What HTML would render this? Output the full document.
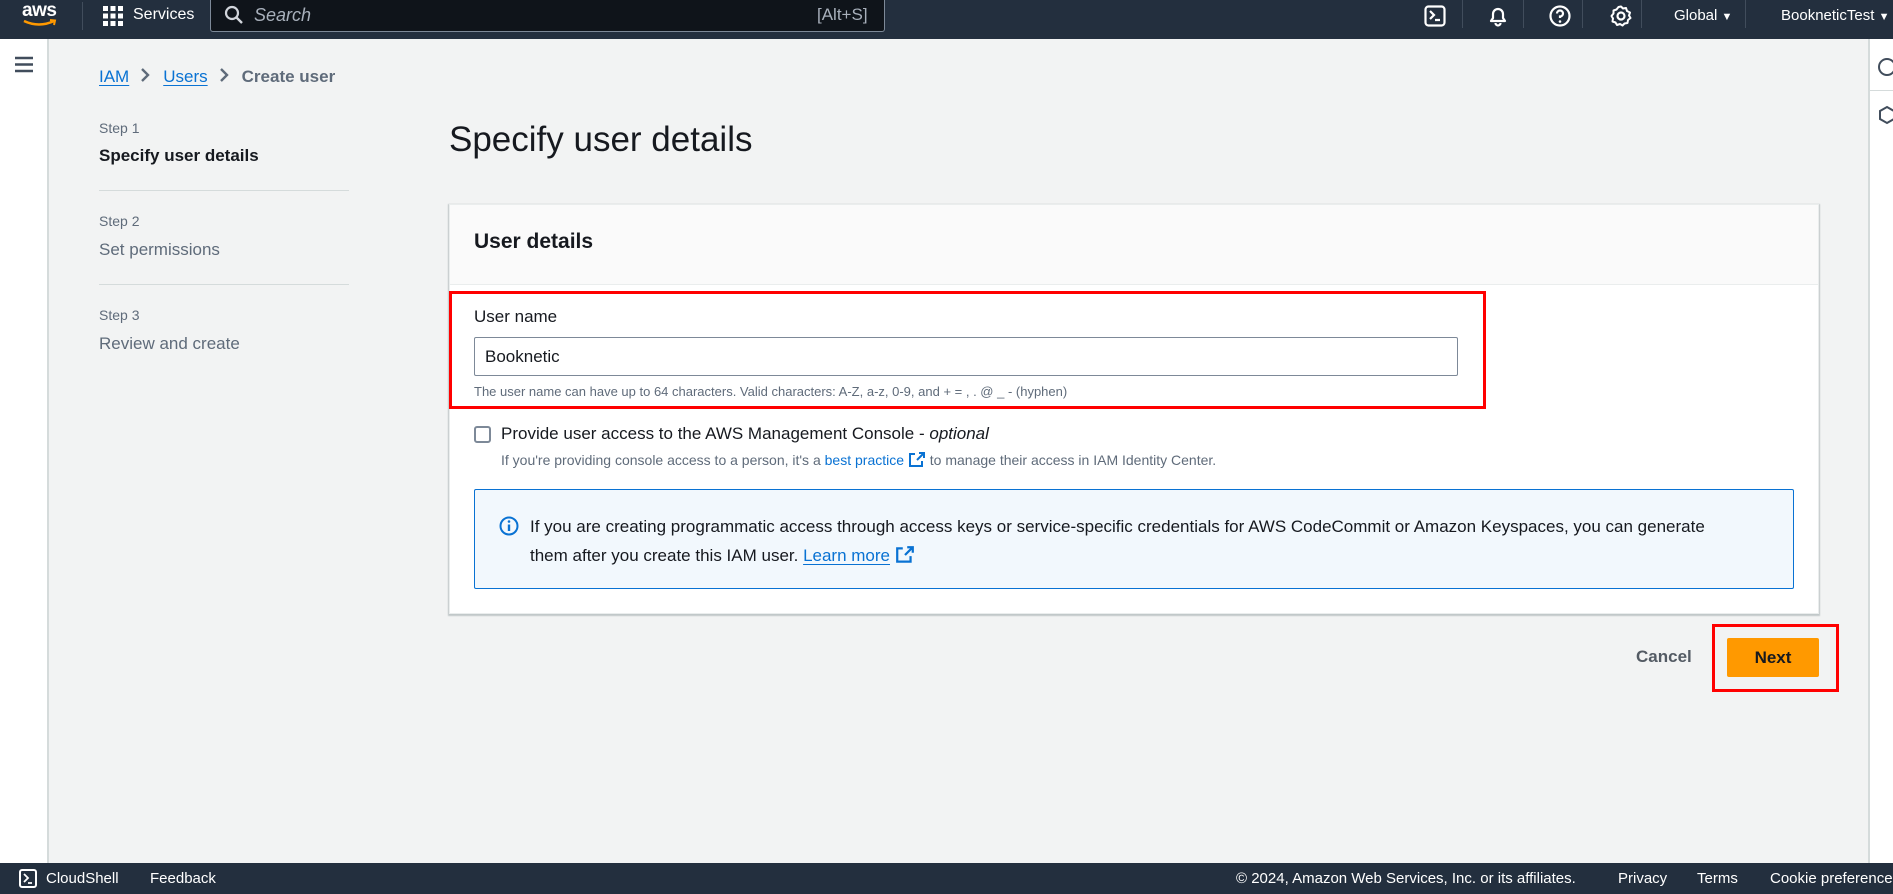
<!DOCTYPE html>
<html><head><meta charset="utf-8">
<style>
*{box-sizing:border-box;margin:0;padding:0}
body{width:1893px;height:894px;overflow:hidden;background:#f2f3f3;font-family:"Liberation Sans",sans-serif;color:#16191f;position:relative}
.abs{position:absolute}
.top{left:0;top:0;width:1893px;height:39px;background:#232f3e}
.white{color:#fff}
.sep{position:absolute;top:0;width:1px;height:28px;background:#414d5c}
.lnk{color:#0972d3;text-decoration:underline;text-underline-offset:3px}
</style></head><body>
<div class="abs top">
  <div class="abs white" style="left:22px;top:0px;font-size:19px;font-weight:bold;letter-spacing:-0.5px">aws</div>
  <svg class="abs" style="left:22px;top:18px" width="36" height="10" viewBox="0 0 36 10"><path d="M2 3 Q17 10 32 3" stroke="#ff9900" stroke-width="2.5" fill="none"/><path d="M28 2 L33 2.5 L32 7" stroke="#ff9900" stroke-width="2" fill="none"/></svg>
  <div class="sep" style="left:82px;top:2px"></div>
  <svg class="abs" style="left:103px;top:6px" width="20" height="20" viewBox="0 0 20 20" fill="#fff"><rect x="0" y="0" width="5" height="5"/><rect x="7.5" y="0" width="5" height="5"/><rect x="15" y="0" width="5" height="5"/><rect x="0" y="7.5" width="5" height="5"/><rect x="7.5" y="7.5" width="5" height="5"/><rect x="15" y="7.5" width="5" height="5"/><rect x="0" y="15" width="5" height="5"/><rect x="7.5" y="15" width="5" height="5"/><rect x="15" y="15" width="5" height="5"/></svg>
  <div class="abs white" style="left:133px;top:6px;font-size:16px">Services</div>
  <div class="abs" style="left:210px;top:-1px;width:675px;height:33px;border:1px solid #7d8998;border-top:none;border-radius:0 0 3px 3px;background:#0f141a"></div>
  <svg class="abs" style="left:224px;top:5px" width="20" height="20" viewBox="0 0 20 20"><circle cx="8" cy="8" r="6" stroke="#d1d5db" stroke-width="2.2" fill="none"/><path d="M12.5 12.5 L18 18" stroke="#d1d5db" stroke-width="2.4"/></svg>
  <div class="abs" style="left:254px;top:5px;font-size:18px;font-style:italic;color:#a8b0bb">Search</div>
  <div class="abs" style="left:817px;top:5px;font-size:17px;color:#a8b0bb">[Alt+S]</div>
  <svg class="abs" style="left:1424px;top:5px" width="22" height="22" viewBox="0 0 22 22"><rect x="1.5" y="1.5" width="19" height="19" rx="3" stroke="#fff" stroke-width="2.2" fill="none"/><path d="M6 6 L10 10 L6 14 M11 15 H16" stroke="#fff" stroke-width="2.2" fill="none"/></svg>
  <div class="sep" style="left:1462px"></div>
  <svg class="abs" style="left:1486px;top:4px" width="24" height="24" viewBox="0 0 24 24"><path d="M5 17 L7 14 V10 A5 5 0 0 1 17 10 V14 L19 17 Z" stroke="#fff" stroke-width="2.2" fill="none" stroke-linejoin="round"/><path d="M9.5 19 A2.5 2.5 0 0 0 14.5 19" stroke="#fff" stroke-width="2.2" fill="none"/></svg>
  <div class="sep" style="left:1523px"></div>
  <svg class="abs" style="left:1548px;top:4px" width="24" height="24" viewBox="0 0 24 24"><circle cx="12" cy="12" r="9.5" stroke="#fff" stroke-width="2.2" fill="none"/><path d="M9 9.5 A3 3 0 1 1 12 12.5 V14" stroke="#fff" stroke-width="2.2" fill="none"/><circle cx="12" cy="17.5" r="1.3" fill="#fff"/></svg>
  <div class="sep" style="left:1582px"></div>
  <svg class="abs" style="left:1609px;top:4px" width="24" height="24" viewBox="0 0 24 24"><path d="M12 2.5 L14 4.5 L17 4 L18 7 L21 8.5 L20 11.5 L21.5 14 L19 16 L18.5 19 L15.5 19.5 L13.5 21.5 L11 20 L8 21 L6.5 18.5 L3.5 17.5 L4 14.5 L2.5 12 L4.5 9.5 L4.5 6.5 L7.5 5.5 L9.5 3 Z" stroke="#fff" stroke-width="2" fill="none" stroke-linejoin="round"/><circle cx="12" cy="12" r="3.5" stroke="#fff" stroke-width="2.2" fill="none"/></svg>
  <div class="sep" style="left:1641px"></div>
  <div class="abs white" style="left:1674px;top:7px;font-size:15px">Global <span style="font-size:11px">▼</span></div>
  <div class="sep" style="left:1745px"></div>
  <div class="abs white" style="left:1781px;top:7px;font-size:15px;white-space:nowrap">BookneticTest <span style="font-size:11px">▼</span></div>
</div>

<div class="abs" style="left:0;top:39px;width:49px;height:824px;background:#fff;border-right:2px solid #d5dbdb"></div>
<svg class="abs" style="left:14px;top:56px" width="20" height="17" viewBox="0 0 20 17"><path d="M1 2 H19 M1 8.5 H19 M1 15 H19" stroke="#414d5c" stroke-width="2.4"/></svg>
<div class="abs" style="left:1868px;top:39px;width:25px;height:824px;background:#fff;border-left:2px solid #d5dbdb"></div>
<div class="abs" style="left:1870px;top:90px;width:23px;height:1px;background:#d5dbdb"></div>
<svg class="abs" style="left:1876px;top:57px" width="17" height="20"><circle cx="11" cy="10" r="8" stroke="#414d5c" stroke-width="2" fill="none"/></svg>
<svg class="abs" style="left:1876px;top:105px" width="17" height="20"><path d="M11 2 L18 6 V14 L11 18 L4 14 V6 Z" stroke="#414d5c" stroke-width="2" fill="none"/></svg>

<div class="abs" style="left:99px;top:67px;font-size:17px;white-space:nowrap">
<span class="lnk">IAM</span><svg width="34" height="16" viewBox="0 0 34 16" style="vertical-align:-1px"><path d="M13 2 L19 8 L13 14" stroke="#5f6b7a" stroke-width="2.4" fill="none"/></svg><span class="lnk">Users</span><svg width="34" height="16" viewBox="0 0 34 16" style="vertical-align:-1px"><path d="M13 2 L19 8 L13 14" stroke="#5f6b7a" stroke-width="2.4" fill="none"/></svg><span style="color:#5f6b7a;font-weight:bold">Create user</span></div>

<div class="abs" style="left:99px;top:120px;font-size:14px;color:#5f6b7a">Step 1</div>
<div class="abs" style="left:99px;top:146px;font-size:17px;font-weight:bold">Specify user details</div>
<div class="abs" style="left:99px;top:190px;width:250px;height:1px;background:#d5dbdb"></div>
<div class="abs" style="left:99px;top:213px;font-size:14px;color:#5f6b7a">Step 2</div>
<div class="abs" style="left:99px;top:240px;font-size:17px;color:#5f6b7a">Set permissions</div>
<div class="abs" style="left:99px;top:284px;width:250px;height:1px;background:#d5dbdb"></div>
<div class="abs" style="left:99px;top:307px;font-size:14px;color:#5f6b7a">Step 3</div>
<div class="abs" style="left:99px;top:334px;font-size:17px;color:#5f6b7a">Review and create</div>

<div class="abs" style="left:449px;top:120px;font-size:35px;color:#16191f">Specify user details</div>

<div class="abs" style="left:449px;top:204px;width:1370px;height:410px;background:#fff;border:1px solid #eaeded;box-shadow:0 1px 1px 1px rgba(0,28,36,.2)">
  <div style="height:80px;background:#fafafa;border-bottom:1px solid #eaeded"></div>
</div>
<div class="abs" style="left:474px;top:230px;font-size:21px;font-weight:bold">User details</div>
<div class="abs" style="left:449px;top:291px;width:1037px;height:118px;border:3px solid #ff0000"></div>
<div class="abs" style="left:474px;top:307px;font-size:17px">User name</div>
<div class="abs" style="left:474px;top:337px;width:984px;height:39px;border:1px solid #7d8998;border-radius:2px;background:#fff"></div>
<div class="abs" style="left:485px;top:347px;font-size:17px">Booknetic</div>
<div class="abs" style="left:474px;top:384px;font-size:13px;color:#5f6b7a;white-space:nowrap">The user name can have up to 64 characters. Valid characters: A-Z, a-z, 0-9, and + = , . @ _ - (hyphen)</div>
<div class="abs" style="left:474px;top:426px;width:17px;height:17px;border:2px solid #7d8998;border-radius:3px;background:#fff"></div>
<div class="abs" style="left:501px;top:424px;font-size:17px;white-space:nowrap">Provide user access to the AWS Management Console - <i>optional</i></div>
<div class="abs" style="left:501px;top:452px;font-size:14px;color:#5f6b7a;white-space:nowrap">If you're providing console access to a person, it's a <span style="color:#0972d3">best practice</span> <svg width="18" height="16" viewBox="0 0 18 16" style="vertical-align:-3px"><path d="M7 2 H2 V14 H14 V9 M9 8 L16 1 M11 1 H16 V6" stroke="#0972d3" stroke-width="2" fill="none"/></svg> to manage their access in IAM Identity Center.</div>
<div class="abs" style="left:474px;top:489px;width:1320px;height:100px;background:#f2f8fd;border:1px solid #0972d3;border-radius:2px"></div>
<svg class="abs" style="left:499px;top:516px" width="20" height="20" viewBox="0 0 20 20"><circle cx="10" cy="10" r="8.5" stroke="#0972d3" stroke-width="2" fill="none"/><path d="M10 8.5 V15" stroke="#0972d3" stroke-width="2.4"/><circle cx="10" cy="5.5" r="1.3" fill="#0972d3"/></svg>
<div class="abs" style="left:530px;top:512px;width:1200px;font-size:17px;line-height:29px">If you are creating programmatic access through access keys or service-specific credentials for AWS CodeCommit or Amazon Keyspaces, you can generate them after you create this IAM user. <span class="lnk">Learn more</span> <svg width="20" height="18" viewBox="0 0 18 16" style="vertical-align:-3px"><path d="M7 2 H2 V14 H14 V9 M9 8 L16 1 M11 1 H16 V6" stroke="#0972d3" stroke-width="2" fill="none"/></svg></div>

<div class="abs" style="left:1636px;top:647px;font-size:17px;font-weight:bold;color:#545b64">Cancel</div>
<div class="abs" style="left:1712px;top:624px;width:127px;height:68px;border:3px solid #ff0000"></div>
<div class="abs" style="left:1727px;top:638px;width:92px;height:39px;background:#ff9900;border-radius:2px;font-size:17px;font-weight:bold;text-align:center;line-height:39px">Next</div>

<div class="abs" style="left:0;top:863px;width:1893px;height:31px;background:#232f3e;color:#fff;font-size:15px">
  <svg class="abs" style="left:19px;top:6px" width="18" height="19" viewBox="0 0 18 19"><rect x="1" y="1" width="16" height="17" rx="2" stroke="#fff" stroke-width="2" fill="none"/><path d="M5 5 L9 9 L5 13 M9 14 H13" stroke="#fff" stroke-width="1.8" fill="none"/></svg>
  <div class="abs" style="left:46px;top:7px">CloudShell</div>
  <div class="abs" style="left:150px;top:7px">Feedback</div>
  <div class="abs" style="left:1236px;top:7px;white-space:nowrap">© 2024, Amazon Web Services, Inc. or its affiliates.</div>
  <div class="abs" style="left:1618px;top:7px">Privacy</div>
  <div class="abs" style="left:1697px;top:7px">Terms</div>
  <div class="abs" style="left:1770px;top:7px;white-space:nowrap">Cookie preferences</div>
</div>
</body></html>
